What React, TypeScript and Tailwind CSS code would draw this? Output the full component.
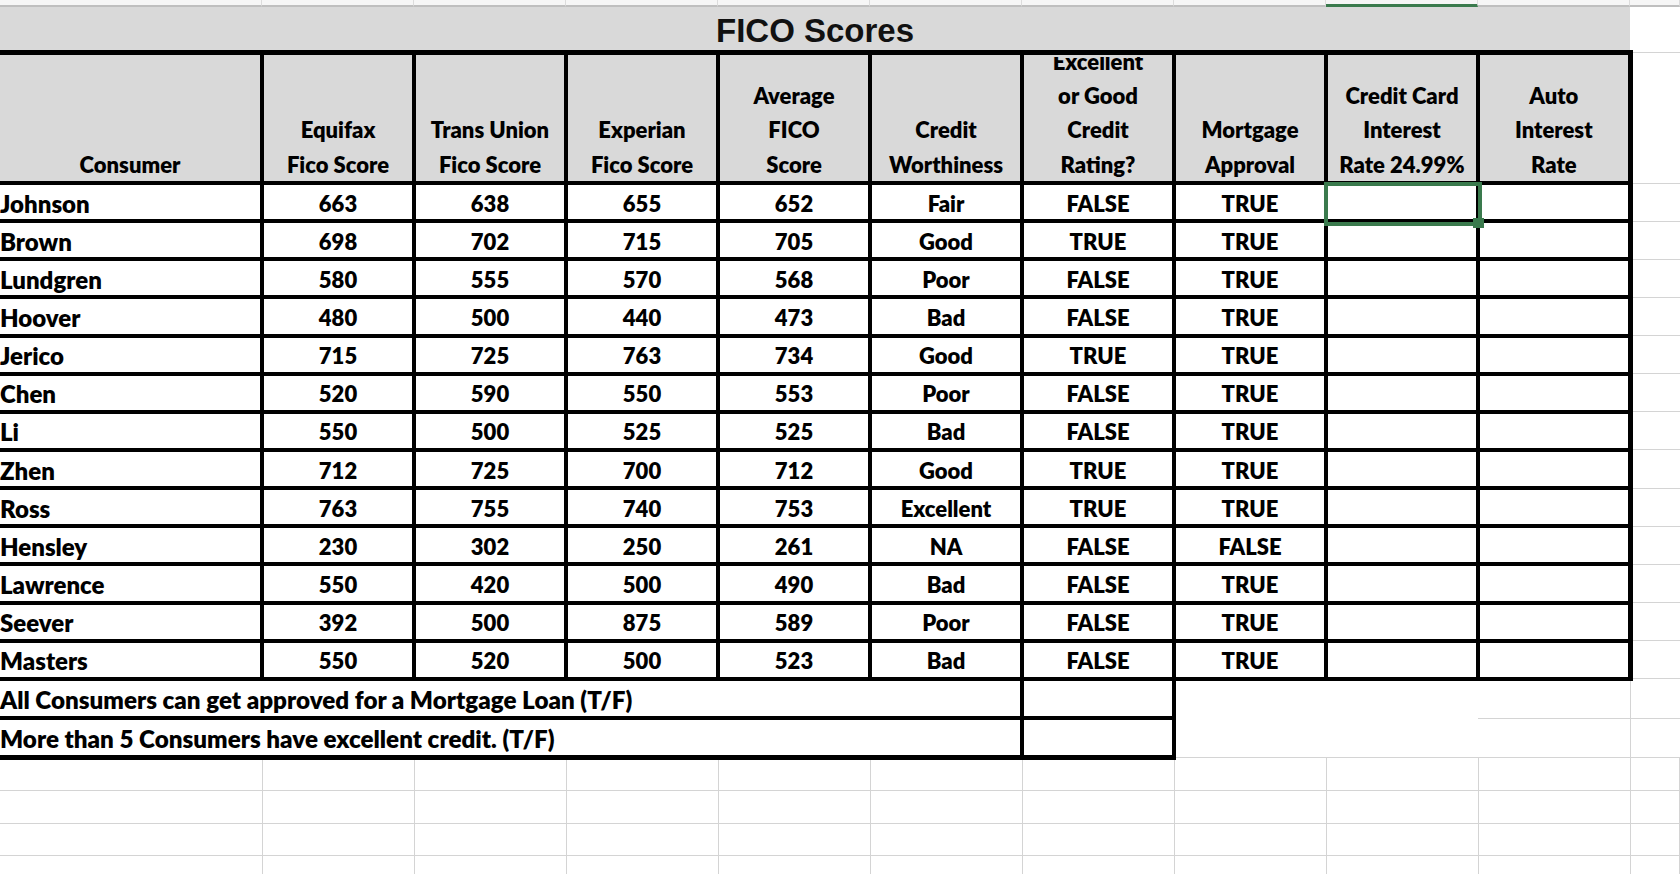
const headers: string[][] = [
  ["Consumer"],
  ["Equifax", "Fico Score"],
  ["Trans Union", "Fico Score"],
  ["Experian", "Fico Score"],
  ["Average", "FICO", "Score"],
  ["Credit", "Worthiness"],
  ["Excellent", "or Good", "Credit", "Rating?"],
  ["Mortgage", "Approval"],
  ["Credit Card", "Interest", "Rate 24.99%"],
  ["Auto", "Interest", "Rate"],
];

const rows: string[][] = [
  ["Johnson", "663", "638", "655", "652", "Fair", "FALSE", "TRUE"],
  ["Brown", "698", "702", "715", "705", "Good", "TRUE", "TRUE"],
  ["Lundgren", "580", "555", "570", "568", "Poor", "FALSE", "TRUE"],
  ["Hoover", "480", "500", "440", "473", "Bad", "FALSE", "TRUE"],
  ["Jerico", "715", "725", "763", "734", "Good", "TRUE", "TRUE"],
  ["Chen", "520", "590", "550", "553", "Poor", "FALSE", "TRUE"],
  ["Li", "550", "500", "525", "525", "Bad", "FALSE", "TRUE"],
  ["Zhen", "712", "725", "700", "712", "Good", "TRUE", "TRUE"],
  ["Ross", "763", "755", "740", "753", "Excellent", "TRUE", "TRUE"],
  ["Hensley", "230", "302", "250", "261", "NA", "FALSE", "FALSE"],
  ["Lawrence", "550", "420", "500", "490", "Bad", "FALSE", "TRUE"],
  ["Seever", "392", "500", "875", "589", "Poor", "FALSE", "TRUE"],
  ["Masters", "550", "520", "500", "523", "Bad", "FALSE", "TRUE"],
];

const summary = [
  "All Consumers can get approved for a Mortgage Loan (T/F)",
  "More than 5 Consumers have excellent credit. (T/F)",
];

const cols = Array.from({ length: 10 }, (_, i) => i);

export default function App() {
  return (
    <div className="relative h-[874px] w-[1680px] overflow-hidden bg-white font-['Lato',sans-serif] font-extrabold text-black">
      {/* column letter strip (cut off) */}
      <div className="grid h-[7px] grid-cols-[262px_repeat(9,152px)_1fr]">
        {[...cols, 10].map((i) => (
          <div
            key={i}
            className={
              i === 8
                ? "border-r border-b-[3px] border-r-[#dcdcdc] border-b-[#3a7a4d] bg-[#f6f6f6]"
                : "border-r border-b-2 border-r-[#dcdcdc] border-b-[#bfbfbf] bg-[#f6f6f6]"
            }
          />
        ))}
      </div>

      <table className="w-full table-fixed border-collapse">
        <colgroup>
          <col className="w-[262px]" />
          {cols.slice(1).map((i) => (
            <col key={i} className="w-[152px]" />
          ))}
          <col />
        </colgroup>
        <tbody>
          {/* title */}
          <tr className="h-[45.5px]">
            <td
              colSpan={10}
              className="border-b-[5px] border-black bg-[#d9d9d9] p-0 pt-1 text-center align-middle font-['Liberation_Sans',Arial,sans-serif] text-[33px] leading-none font-bold text-[#111]"
            >
              FICO Scores
            </td>
            <td className="border-b border-[#d4d4d4] p-0" />
          </tr>

          {/* headers */}
          <tr className="h-[130.5px]">
            {headers.map((lines, i) => (
              <td
                key={i}
                className={
                  i === 0
                    ? "border-4 border-t-[5px] border-l-0 border-black bg-[#d9d9d9] p-0 align-bottom"
                    : i === 9
                      ? "border-4 border-t-[5px] border-r-[5px] border-black bg-[#d9d9d9] p-0 align-bottom"
                      : "border-4 border-t-[5px] border-black bg-[#d9d9d9] p-0 align-bottom"
                }
              >
                <div className="flex h-[125px] translate-y-[1px] flex-col items-center justify-end overflow-hidden text-[22px] leading-[34.3px] whitespace-nowrap">
                  {lines.map((l) => (
                    <div key={l}>{l}</div>
                  ))}
                </div>
              </td>
            ))}
            <td className="border-b border-[#d4d4d4] p-0" />
          </tr>

          {/* data */}
          {rows.map((r) => (
            <tr key={r[0]} className="h-[38.15px]">
              {cols.map((i) => (
                <td
                  key={i}
                  className={
                    i === 0
                      ? "border-4 border-l-0 border-black p-0 pt-[3px] text-left align-middle text-[24px] leading-none whitespace-nowrap"
                      : i === 9
                        ? "border-4 border-r-[5px] border-black p-0 pt-[3px] text-center align-middle text-[22px] leading-none"
                        : "border-4 border-black p-0 pt-[3px] text-center align-middle text-[22px] leading-none"
                  }
                >
                  {r[i] ?? ""}
                </td>
              ))}
              <td className="border-b border-[#d4d4d4] p-0" />
            </tr>
          ))}

          {/* summary questions */}
          {summary.map((s, k) => (
            <tr key={s} className="h-[39.3px]">
              <td
                colSpan={6}
                className={
                  k === 1
                    ? "border-4 border-b-[5px] border-l-0 border-black p-0 pt-[3px] text-left align-middle text-[24.2px] leading-none whitespace-nowrap"
                    : "border-4 border-l-0 border-black p-0 pt-[3px] text-left align-middle text-[24.2px] leading-none whitespace-nowrap"
                }
              >
                {s}
              </td>
              <td
                className={
                  k === 1
                    ? "border-4 border-b-[5px] border-black p-0"
                    : "border-4 border-black p-0"
                }
              />
              <td colSpan={2} className="bg-white p-0" />
              <td className="border-b border-[#d4d4d4] p-0" />
              <td className="border-b border-l border-[#d4d4d4] p-0" />
            </tr>
          ))}

          {/* empty sheet rows */}
          {[0, 1, 2, 3].map((k) => (
            <tr key={k} className="h-[32.8px]">
              {[...cols, 10].map((i) => (
                <td
                  key={i}
                  className={
                    i === 0
                      ? "border border-l-0 border-[#d4d4d4] p-0"
                      : "border border-[#d4d4d4] p-0"
                  }
                />
              ))}
            </tr>
          ))}
        </tbody>
      </table>

      {/* active cell selection */}
      <div className="absolute top-[182px] left-[1324px] h-[44px] w-[158px] border-4 border-[#3a7a4d]" />
      <div className="absolute top-[218px] left-[1473px] h-[10px] w-[11px] bg-[#3a7a4d]" />
    </div>
  );
}
